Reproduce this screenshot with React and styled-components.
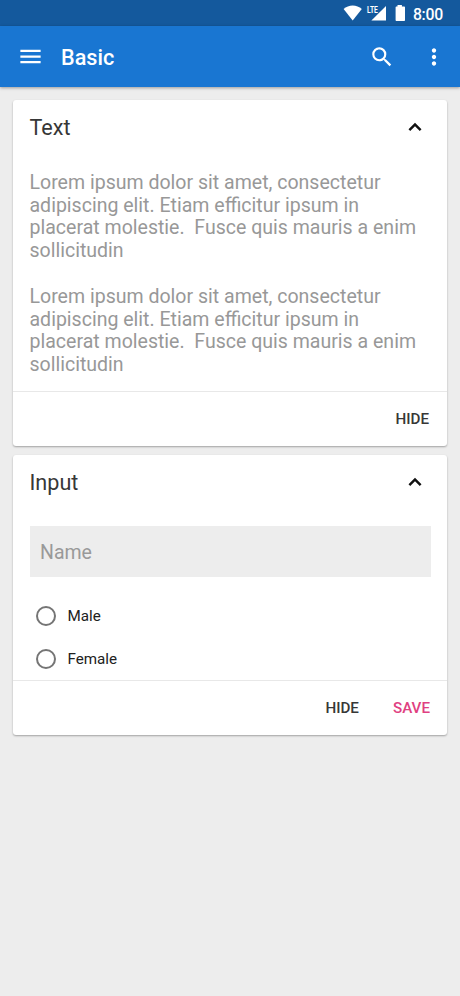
import React, { useState } from "react";
import styled, { createGlobalStyle } from "styled-components";

const GlobalStyle = createGlobalStyle`
  * {
    box-sizing: border-box;
  }

  body {
    margin: 0;
    background: #ededed;
    font-family: Roboto, "Liberation Sans", sans-serif;
  }

  button {
    padding: 0;
    border: 0;
    background: none;
    font-family: inherit;
  }

  svg {
    display: block;
    fill: currentColor;
  }
`;

const Screen = styled.div`
  min-height: 996px;
  background: #ededed;
`;

const StatusBar = styled.div`
  display: flex;
  align-items: center;
  justify-content: flex-end;
  height: 26px;
  padding-right: 17px;
  background: #14599d;
  color: #fff;
`;

const Clock = styled.span`
  margin-left: 7px;
  padding-top: 3px;
  font-size: 15.8px;
  line-height: 20px;
  font-weight: 500;
  letter-spacing: -0.25px;
`;

const AppBar = styled.header`
  display: flex;
  align-items: center;
  height: 61px;
  padding: 0 13px 0 17px;
  background: #1976d2;
  color: #fff;
  box-shadow: 0 1px 3px rgba(0, 0, 0, 0.35);
`;

const IconButton = styled.button`
  display: flex;
  color: ${(props) => props.$color || "#fff"};
`;

const Title = styled.h1`
  flex: 1;
  margin: 0 0 0 17px;
  padding-top: 2px;
  font-size: 21.6px;
  line-height: 28px;
  font-weight: 500;
`;

const Actions = styled.div`
  display: flex;
  gap: 26px;
`;

const Content = styled.main`
  display: flex;
  flex-direction: column;
  gap: 9px;
  padding: 12.5px 13px 0;
`;

const Card = styled.section`
  height: ${(props) => props.$height}px;
  display: flex;
  flex-direction: column;
  border-radius: 3px;
  background: #fff;
  box-shadow: 0 1px 2px rgba(0, 0, 0, 0.32);
`;

const CardHeader = styled.div`
  display: flex;
  flex-shrink: 0;
  align-items: center;
  justify-content: space-between;
  height: 55px;
  padding: 0 19px 0 16.5px;
`;

const CardTitle = styled.h2`
  margin: 0;
  padding-top: 1px;
  font-size: 21.6px;
  line-height: 28px;
  font-weight: 400;
  color: #373737;
`;

const CardBody = styled.div`
  flex: 1;
  min-height: 0;
  padding: ${(props) => props.$top}px 16.5px 0;
`;

const Paragraph = styled.p`
  margin: 0;
  font-size: 19.55px;
  line-height: 22.8px;
  color: #989898;
  white-space: pre-line;

  & + & {
    margin-top: 22.8px;
  }
`;

const TextField = styled.input`
  display: block;
  width: 100%;
  height: 51.5px;
  padding: 2px 10.5px 0;
  border: 0;
  border-radius: 0;
  outline: none;
  background: #ededed;
  font-family: inherit;
  font-size: 19.5px;
  color: #373737;

  &::placeholder {
    color: #999;
    opacity: 1;
  }
`;

const RadioGroup = styled.div`
  padding: 17px 0 0 6px;
`;

const RadioLabel = styled.label`
  display: flex;
  align-items: center;
  gap: 12px;
  height: 43.5px;
  font-size: 15.2px;
  color: #212121;
`;

const Radio = styled.input`
  appearance: none;
  width: 20px;
  height: 20px;
  margin: 0;
  border: 2px solid #757575;
  border-radius: 50%;

  &:checked {
    border-color: #e04081;
    background: radial-gradient(#e04081 50%, transparent 55%);
  }
`;

const CardActions = styled.div`
  display: flex;
  flex-shrink: 0;
  align-items: center;
  justify-content: flex-end;
  gap: 34px;
  height: 55px;
  padding: 0 ${(props) => props.$inset}px 0 0;
  border-top: 1px solid #e8e8e8;
`;

const TextButton = styled.button`
  font-size: 15.2px;
  line-height: 20px;
  font-weight: 500;
  color: ${(props) => (props.$accent ? "#e04081" : "#373737")};
`;

const LOREM =
  "Lorem ipsum dolor sit amet, consectetur\nadipiscing elit. Etiam efficitur ipsum in\nplacerat molestie. \u00a0Fusce quis mauris a enim\nsollicitudin";

const StatusIcons = () => (
  <svg width="64" height="26" viewBox="0 0 64 26">
    {/* wifi */}
    <path d="M1.6 9C6.5 4.3 14.9 4.3 19.8 9L10.7 20.4Z" />
    {/* mobile signal */}
    <path d="M44 6V20.6H29.4Z" />
    <text
      x="25"
      y="12.6"
      fontSize="9.6"
      fontWeight="700"
      textLength="10.8"
      lengthAdjust="spacingAndGlyphs"
      stroke="#14599d"
      strokeWidth="0.6"
      paintOrder="stroke"
    >
      LTE
    </text>
    {/* battery */}
    <path d="M55.5 5h4.4v1.5h2.1c.6 0 1 .4 1 1v12.4c0 .6-.4 1-1 1h-7.4c-.6 0-1-.4-1-1v-12.4c0-.6.4-1 1-1h.9z" />
  </svg>
);

const MenuIcon = () => (
  <svg width="27" height="27" viewBox="0 0 24 24">
    <path d="M3 18h18v-2H3v2zm0-5h18v-2H3v2zm0-7v2h18V6H3z" />
  </svg>
);

const SearchIcon = () => (
  <svg width="26" height="26" viewBox="0 0 24 24">
    <path d="M15.5 14h-.79l-.28-.27A6.47 6.47 0 0 0 16 9.5 6.5 6.5 0 1 0 9.5 16c1.61 0 3.09-.59 4.23-1.57l.27.28v.79l5 4.99L20.49 19l-4.99-5zm-6 0C7.01 14 5 11.99 5 9.5S7.01 5 9.5 5 14 7.01 14 9.5 11.99 14 9.5 14z" />
  </svg>
);

const MoreIcon = () => (
  <svg width="26" height="26" viewBox="0 0 24 24">
    <path d="M12 8c1.1 0 2-.9 2-2s-.9-2-2-2-2 .9-2 2 .9 2 2 2zm0 2c-1.1 0-2 .9-2 2s.9 2 2 2 2-.9 2-2-.9-2-2-2zm0 6c-1.1 0-2 .9-2 2s.9 2 2 2 2-.9 2-2-.9-2-2-2z" />
  </svg>
);

const ChevronUpIcon = () => (
  <svg width="26" height="26" viewBox="0 0 24 24">
    <path d="M12 8.1l-6 6 1.6 1.6L12 11.3l4.4 4.4L18 14.1z" />
  </svg>
);

const Header = ({ title }) => (
  <CardHeader>
    <CardTitle>{title}</CardTitle>
    <IconButton $color="#111" aria-label="Collapse">
      <ChevronUpIcon />
    </IconButton>
  </CardHeader>
);

const App = () => {
  const [name, setName] = useState("");

  return (
    <Screen>
      <GlobalStyle />
      <StatusBar>
        <StatusIcons />
        <Clock>8:00</Clock>
      </StatusBar>
      <AppBar>
        <IconButton aria-label="Menu">
          <MenuIcon />
        </IconButton>
        <Title>Basic</Title>
        <Actions>
          <IconButton aria-label="Search">
            <SearchIcon />
          </IconButton>
          <IconButton aria-label="More">
            <MoreIcon />
          </IconButton>
        </Actions>
      </AppBar>
      <Content>
        <Card $height={346}>
          <Header title="Text" />
          <CardBody $top={17.4}>
            <Paragraph>{LOREM}</Paragraph>
            <Paragraph>{LOREM}</Paragraph>
          </CardBody>
          <CardActions $inset={18}>
            <TextButton>HIDE</TextButton>
          </CardActions>
        </Card>
        <Card $height={280}>
          <Header title="Input" />
          <CardBody $top={16}>
            <TextField
              placeholder="Name"
              value={name}
              onChange={(e) => setName(e.target.value)}
            />
            <RadioGroup>
              <RadioLabel>
                <Radio type="radio" name="gender" value="male" />
                Male
              </RadioLabel>
              <RadioLabel>
                <Radio type="radio" name="gender" value="female" />
                Female
              </RadioLabel>
            </RadioGroup>
          </CardBody>
          <CardActions $inset={17}>
            <TextButton>HIDE</TextButton>
            <TextButton $accent>SAVE</TextButton>
          </CardActions>
        </Card>
      </Content>
    </Screen>
  );
};

export default App;
